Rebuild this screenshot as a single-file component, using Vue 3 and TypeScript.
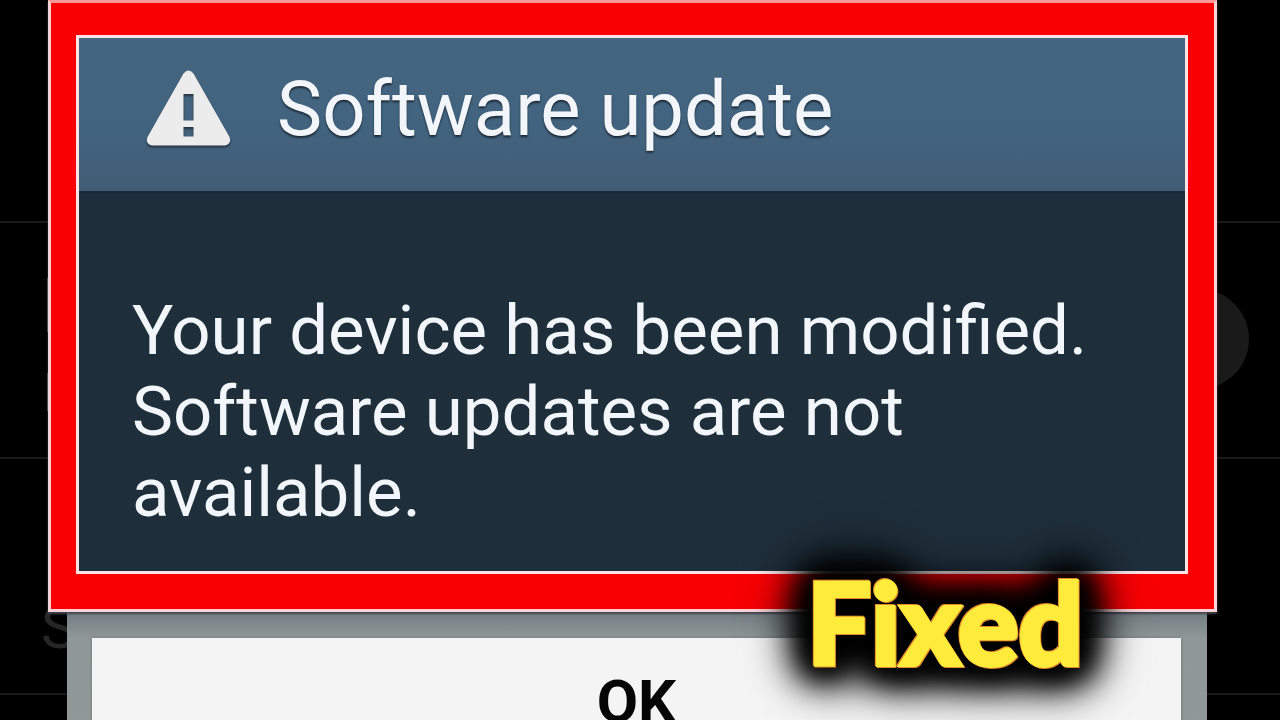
<script setup lang="ts">
const title: string = 'Software update'
const message: string = 'Your device has been modified. Software updates are not available.'
</script>

<template>
  <main class="screen">
    <div class="settings" aria-hidden="true">
      <div class="row row-first"></div>
      <div class="row"><i class="edge edge-title"></i><i class="edge edge-sub"></i><i class="knob"></i></div>
      <div class="row"><span class="label">S</span></div>
    </div>

    <section class="dialog" role="alertdialog" aria-labelledby="dialog-title" aria-describedby="dialog-text">
      <div class="frame">
        <div class="panel">
          <header class="head">
            <svg class="warning" viewBox="0 0 86 80" aria-hidden="true">
              <path
                fill="#ececec"
                fill-rule="evenodd"
                d="M38.500 4.500Q43.500 -1.500 48.500 4.500L84.500 68Q87 75 80 76.500H7Q0 75 2.500 68ZM38.500 25V51.500H48.500V25ZM38.500 58V67.500H48.500V58Z"
              />
            </svg>
            <h1 id="dialog-title">{{ title }}</h1>
          </header>
          <p id="dialog-text" class="message">{{ message }}</p>
        </div>
      </div>
      <footer class="actions">
        <button type="button">OK</button>
      </footer>
      <strong class="stamp">Fixed</strong>
    </section>
  </main>
</template>

<style>
body {
  margin: 0;
  background: #000;
}
</style>

<style scoped>
.screen {
  position: relative;
  height: 100vh;
  overflow: hidden;
  box-sizing: border-box;
  padding: 0 63px 0 48px;
  background: #000;
  font-family: Roboto, "Liberation Sans", sans-serif;
}

.settings {
  position: absolute;
  inset: 0;
}

.row {
  position: relative;
  box-sizing: border-box;
  height: 236px;
  border-bottom: 2px solid #191919;
}

.row-first {
  height: 223px;
}

.label {
  position: absolute;
  left: 41px;
  bottom: 30px;
  font-size: 60px;
  line-height: 70px;
  font-weight: 400;
  color: #262626;
}

.knob {
  position: absolute;
  top: 66px;
  right: 31px;
  width: 100px;
  height: 100px;
  border-radius: 50%;
  background: #1a1a1a;
}

.edge {
  position: absolute;
  left: 47px;
  width: 1px;
  background: #555;
}

.edge-title {
  top: 55px;
  height: 54px;
}

.edge-sub {
  top: 150px;
  height: 38px;
}

.dialog {
  position: relative;
}

.frame {
  position: relative;
  box-sizing: border-box;
  padding: 32px 26px 35px 25px;
  border: 3px solid #fbd3d6;
  border-top-color: #f99;
  background: #f80004;
  box-shadow: 0 2px 2px #444452;
}

.panel {
  border: 3px solid #fbe3e6;
  background: #1e2e3a;
}

.head {
  display: flex;
  align-items: center;
  gap: 46px;
  box-sizing: border-box;
  height: 156px;
  padding: 0 66px 11px;
  background: linear-gradient(#44657f, #426480 50%, #415d76);
  border-bottom: 3px solid #1a2a3b;
}

.warning {
  flex: none;
  width: 86px;
  height: 80px;
  filter: drop-shadow(0 2px 1px #26333f);
}

h1 {
  margin: 0;
  font-size: 76px;
  line-height: 88px;
  font-weight: 400;
  color: #f2f6fa;
  text-shadow: 0 2px 2px #1d2b38;
}

.message {
  margin: 0;
  padding: 96px 53px 38px;
  font-size: 69px;
  line-height: 81px;
  color: #f2f6fa;
}

.actions {
  margin: 0 10px 0 19px;
  padding: 26px 26px 20px 25px;
  background: linear-gradient(#737c82, #8f9896 26px, #929998);
}

button {
  display: block;
  width: 100%;
  height: 128px;
  padding: 0;
  border: 0;
  background: #f4f4f4;
  box-shadow: 0 0 3px #6c7371;
  color: #050505;
  font: 700 60px/70px Roboto, "Liberation Sans", sans-serif;
}

.stamp {
  position: absolute;
  right: 134px;
  top: 551px;
  font-family: Lato, "Open Sans", sans-serif;
  font-size: 113px;
  line-height: 140px;
  font-weight: 900;
  color: #ffeb3b;
  -webkit-text-stroke: 4px #ffeb3b;
  filter: drop-shadow(1px 1px 0 #e08a28) drop-shadow(-1px -1px 0 #e08a28) drop-shadow(0 0 12px #000)
    drop-shadow(0 0 16px #000) drop-shadow(0 0 16px #000) drop-shadow(0 0 16px #000);
}
</style>
